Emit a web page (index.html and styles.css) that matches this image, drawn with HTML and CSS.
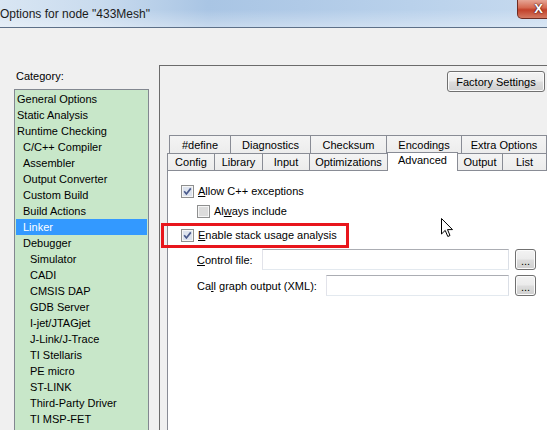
FILE: index.html
```html
<!DOCTYPE html>
<html>
<head>
<meta charset="utf-8">
<link rel="stylesheet" href="styles.css">
</head>
<body>
<div class="window">
  <div class="titlebar">
    <span class="title">Options for node "433Mesh"</span>
    <div class="close">X</div>
  </div>
  <div class="main">
    <div class="sidebar">
      <div class="cat-label">Category:</div>
      <ul class="cat-list">
        <li class="l0">General Options</li>
        <li class="l0">Static Analysis</li>
        <li class="l0">Runtime Checking</li>
        <li class="l1">C/C++ Compiler</li>
        <li class="l1">Assembler</li>
        <li class="l1">Output Converter</li>
        <li class="l1">Custom Build</li>
        <li class="l1">Build Actions</li>
        <li class="l1 selected">Linker</li>
        <li class="l1">Debugger</li>
        <li class="l2">Simulator</li>
        <li class="l2">CADI</li>
        <li class="l2">CMSIS DAP</li>
        <li class="l2">GDB Server</li>
        <li class="l2">I-jet/JTAGjet</li>
        <li class="l2">J-Link/J-Trace</li>
        <li class="l2">TI Stellaris</li>
        <li class="l2">PE micro</li>
        <li class="l2">ST-LINK</li>
        <li class="l2">Third-Party Driver</li>
        <li class="l2">TI MSP-FET</li>
      </ul>
    </div>
    <div class="panel">
      <button class="btn factory">Factory Settings</button>
      <div class="tabs">
        <div class="tabrow tabrow-back">
          <div class="tab w-define">#define</div>
          <div class="tab w-diag">Diagnostics</div>
          <div class="tab w-check">Checksum</div>
          <div class="tab w-enc">Encodings</div>
          <div class="tab w-extra">Extra Options</div>
        </div>
        <div class="tabrow tabrow-front">
          <div class="tab w-config">Config</div>
          <div class="tab w-lib">Library</div>
          <div class="tab w-input">Input</div>
          <div class="tab w-opt">Optimizations</div>
          <div class="tab w-adv active">Advanced</div>
          <div class="tab w-out">Output</div>
          <div class="tab w-list">List</div>
        </div>
      </div>
      <div class="page">
        <div class="opt">
          <svg class="cb" width="13" height="13" viewBox="0 0 13 13"><rect x="0.5" y="0.5" width="12" height="12" fill="#f6f6f6" stroke="#8e8f8f"/><rect x="2" y="2" width="9" height="9" fill="#dde3ee"/><path d="M3.2 6.3 L5.4 9 L9.8 3.4" fill="none" stroke="#4a5a8c" stroke-width="1.7"/></svg>
          <span><u>A</u>llow C++ exceptions</span>
        </div>
        <div class="opt opt-sub">
          <svg class="cb" width="13" height="13" viewBox="0 0 13 13"><rect x="0.5" y="0.5" width="12" height="12" fill="#f6f6f6" stroke="#8e8f8f"/><rect x="2" y="2" width="9" height="9" fill="#dcdcdc"/></svg>
          <span>Al<u>w</u>ays include</span>
        </div>
        <div class="opt opt-stack">
          <svg class="cb" width="13" height="13" viewBox="0 0 13 13"><rect x="0.5" y="0.5" width="12" height="12" fill="#f6f6f6" stroke="#8e8f8f"/><rect x="2" y="2" width="9" height="9" fill="#dde3ee"/><path d="M3.2 6.3 L5.4 9 L9.8 3.4" fill="none" stroke="#4a5a8c" stroke-width="1.7"/></svg>
          <span><u>E</u>nable stack usage analysis</span>
          <span class="annot"></span>
        </div>
        <div class="field">
          <span class="lbl lbl-control"><u>C</u>ontrol file:</span>
          <div class="input"></div>
          <button class="btn browse">...</button>
        </div>
        <div class="field field-call">
          <span class="lbl lbl-call">Ca<u>l</u>l graph output (XML):</span>
          <div class="input"></div>
          <button class="btn browse">...</button>
        </div>
      </div>
    </div>
  </div>
  <svg class="cursor" width="13" height="20" viewBox="0 0 13 20"><path d="M0.5 0.5 L0.5 16 L4.2 12.4 L6.8 18.5 L9 17.5 L6.5 11.6 L11.5 11.6 Z" fill="#ffffff" stroke="#000000" stroke-width="1" stroke-linejoin="miter"/></svg>
</div>
</body>
</html>
```
FILE: styles.css
```css
html, body {
  margin: 0;
  padding: 0;
}
body {
  width: 547px;
  height: 430px;
  overflow: hidden;
  background: #f0f0f0;
  font-family: "Liberation Sans", Arial, sans-serif;
  font-size: 11px;
  color: #000;
}
.window {
  position: relative;
  width: 547px;
  height: 430px;
  display: flex;
  flex-direction: column;
  overflow: hidden;
}
.titlebar {
  height: 27px;
  flex: none;
  display: flex;
  align-items: flex-start;
  border-bottom: 1px solid #5d7088;
  background:
    linear-gradient(180deg, rgba(255,255,255,0) 35%, rgba(255,255,255,0.35) 100%),
    linear-gradient(90deg, #d9e6f3 0%, #c9dbee 18%, #a9c5e4 38%, #b0cae7 55%, #b9d1eb 75%, #c6daef 100%);
}
.title {
  font-size: 12px;
  line-height: 28px;
  color: #1b1b1b;
  white-space: nowrap;
}
.close {
  margin-left: auto;
  margin-right: -13px;
  width: 43px;
  height: 19px;
  box-sizing: border-box;
  border: 1px solid #6e2c22;
  border-top: none;
  border-radius: 0 0 0 5px;
  background: linear-gradient(180deg, #e6a595 0%, #d56a52 42%, #c2412a 55%, #d47a62 100%);
  color: #fff;
  font-weight: bold;
  font-size: 13px;
  line-height: 18px;
  text-align: center;
  text-shadow: 0 0 2px #4a1510, 0 0 1px #4a1510;
}
.main {
  flex: 1;
  display: flex;
  align-items: stretch;
  min-height: 0;
}
.sidebar {
  width: 159px;
  flex: none;
  padding-top: 41px;
}
.cat-label {
  margin-left: 16px;
  line-height: 14px;
  height: 14px;
}
.cat-list {
  list-style: none;
  margin: 6px 0 0 14px;
  padding: 1px;
  width: 135px;
  height: 360px;
  box-sizing: border-box;
  border: 1px solid #828790;
  background: #c8e7c9;
}
.cat-list li {
  height: 16px;
  line-height: 16px;
  white-space: nowrap;
}
.cat-list .l0 { padding-left: 1px; }
.cat-list .l1 { padding-left: 7px; }
.cat-list .l2 { padding-left: 14px; }
.cat-list .selected {
  background: #3399ff;
  color: #fff;
}
.panel {
  flex: 1;
  margin-top: 37px;
  border-top: 1px solid #6b6b6b;
  border-left: 1px solid #6b6b6b;
  display: flex;
  flex-direction: column;
  padding: 5px 0 0 7px;
  min-width: 0;
}
.btn {
  font-family: "Liberation Sans", Arial, sans-serif;
  font-size: 11px;
  color: #000;
  padding: 0;
  box-sizing: border-box;
  border: 1px solid #707070;
  border-radius: 3px;
  background: linear-gradient(180deg, #f3f3f3 0%, #ebebeb 48%, #dddddd 52%, #cfcfcf 100%);
  box-shadow: inset 0 0 0 1px #fbfbfb;
}
.factory {
  align-self: flex-end;
  margin-right: 2px;
  width: 98px;
  height: 21px;
  flex: none;
}
.tabs {
  margin-top: 43px;
  flex: none;
}
.tabrow {
  display: flex;
}
.tab {
  box-sizing: border-box;
  border: 1px solid #898c95;
  border-bottom: none;
  background: linear-gradient(180deg, #f4f4f4 0%, #ececec 100%);
  text-align: center;
  white-space: nowrap;
  flex: none;
}
.tab + .tab {
  margin-left: -1px;
}
.tabrow-back {
  margin-left: 2px;
  height: 18px;
}
.tabrow-back .tab {
  height: 18px;
  line-height: 18px;
}
.tabrow-front {
  height: 17px;
  align-items: flex-end;
}
.tabrow-front .tab {
  height: 17px;
  line-height: 17px;
}
.tabrow-front .tab.active {
  height: 19px;
  line-height: 15px;
  margin-bottom: -1px;
  background: #fff;
  position: relative;
  z-index: 1;
}
.w-define { width: 62px; }
.w-diag { width: 81px; }
.w-check { width: 77px; }
.w-enc { width: 76px; }
.w-extra { width: 86px; }
.w-config { width: 48px; }
.w-lib { width: 49px; }
.w-input { width: 48px; }
.w-opt { width: 79px; }
.w-adv { width: 71px; }
.w-out { width: 46px; }
.w-list { width: 45px; }
.page {
  flex: 1;
  background: #fff;
  border-top: 1px solid #898c95;
  border-left: 1px solid #898c95;
  padding: 12px 11px 0 13px;
  display: flex;
  flex-direction: column;
}
.opt {
  display: flex;
  align-items: center;
  gap: 4px;
  height: 16px;
  white-space: nowrap;
}
.cb {
  flex: none;
  display: block;
}
.opt-sub {
  margin-left: 16px;
  margin-top: 4px;
}
.opt-stack {
  margin-top: 8px;
  position: relative;
}
.annot {
  position: absolute;
  left: -20px;
  top: -4px;
  width: 188px;
  height: 25px;
  box-sizing: border-box;
  border: 3px solid #e8161c;
}
.field {
  display: flex;
  align-items: center;
  height: 21px;
  margin-left: 16px;
  margin-top: 6px;
}
.field-call {
  margin-top: 5px;
}
.lbl {
  flex: none;
  white-space: nowrap;
}
.lbl-control { width: 65px; }
.lbl-call { width: 129px; }
.input {
  flex: 1;
  height: 21px;
  box-sizing: border-box;
  border: 1px solid;
  border-color: #abadb3 #dbdfe6 #e3e9ef #e2e3ea;
  background: #fff;
}
.browse {
  flex: none;
  width: 21px;
  height: 21px;
  margin-left: 6px;
  line-height: 22px;
}
.cursor {
  position: absolute;
  left: 441px;
  top: 218px;
}
```
